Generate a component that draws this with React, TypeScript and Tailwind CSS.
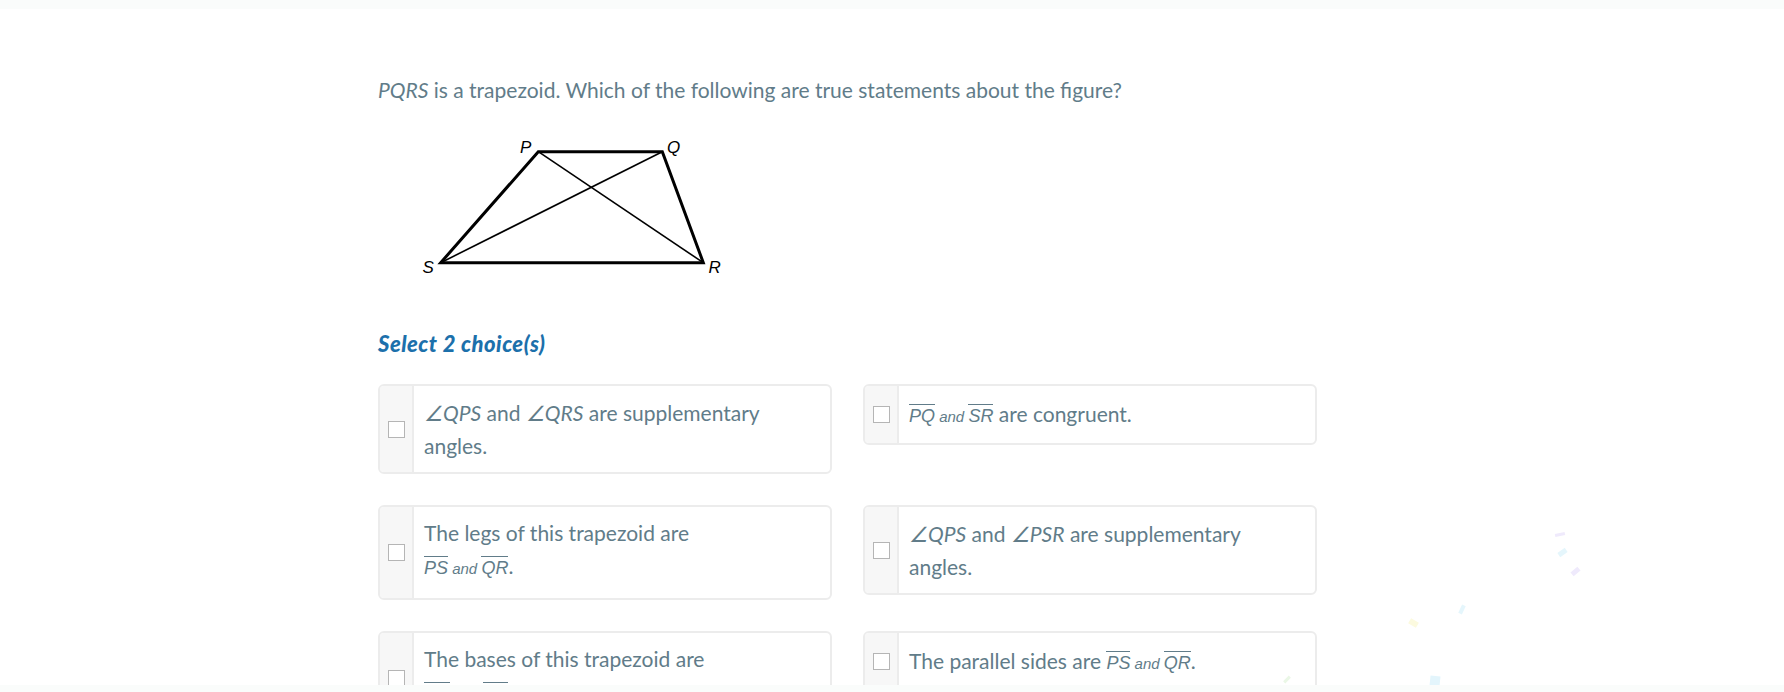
import React from "react";

const textFont = { fontFamily: "Lato, 'Noto Sans', sans-serif" };

function Bar({ children }: { children: React.ReactNode }) {
  return (
    <span className="inline-block border-t border-current leading-[23px] align-baseline">
      {children}
    </span>
  );
}

function Seg({ a, b }: { a: string; b: string }) {
  return (
    <span className="italic text-[18px]" style={{ fontFamily: "'Liberation Sans', Arial, sans-serif" }}>
      <Bar>{a}</Bar>
      <span className="text-[15px]"> and </span>
      <Bar>{b}</Bar>
    </span>
  );
}

function Card({ children, tall = false }: { children: React.ReactNode; tall?: boolean }) {
  return (
    <div className="flex border-2 border-[#ececec] rounded-[6px] bg-white overflow-hidden">
      <div className="w-[34px] shrink-0 bg-[#f7f7f7] border-r-2 border-[#ececec] flex items-center justify-center">
        <div className="w-[17px] h-[17px] border border-[#b5b5b5] bg-white" />
      </div>
      <div
        className={
          tall
            ? "flex-1 min-h-[57px] flex items-center pl-[10px] pr-[12px] pt-[9px] pb-[13px] text-[21px] leading-[33px] text-[#617c89]"
            : "flex-1 min-h-[57px] flex items-center pl-[10px] pr-[12px] py-[10px] text-[21px] leading-[33px] text-[#617c89]"
        }
      >
        <div>{children}</div>
      </div>
    </div>
  );
}

export default function App() {
  return (
    <div className="relative w-full h-[692px] overflow-hidden bg-white" style={textFont}>
      <div className="h-[9px] bg-[#fafcfb]" />
      <div className="ml-[378px] w-[939px] pt-[66px]">
        <p className="text-[21px] leading-[30px] text-[#617c89]">
          <i>PQRS</i> is a trapezoid. Which of the following are true statements about the figure?
        </p>
        <svg width="370" height="170" viewBox="0 0 370 170" className="mt-[15px] block">
          <g stroke="#000" fill="none" strokeLinejoin="miter">
            <polygon points="160.3,31.7 284.3,31.7 325.3,142.7 62.7,142.7" strokeWidth="3" />
            <line x1="160.3" y1="31.7" x2="325.3" y2="142.7" strokeWidth="1.6" />
            <line x1="284.3" y1="31.7" x2="62.7" y2="142.7" strokeWidth="1.6" />
          </g>
          <g fontFamily="'Liberation Sans', Arial, sans-serif" fontStyle="italic" fontSize="17" fill="#000">
            <text x="142" y="33">P</text>
            <text x="289" y="33">Q</text>
            <text x="44.5" y="153">S</text>
            <text x="330.5" y="153">R</text>
          </g>
        </svg>
        <p className="mt-[39px] text-[22px] leading-[30px] font-black italic tracking-[0.5px] text-[#1c70ab]">
          Select 2 choice(s)
        </p>
        <div className="mt-[25px] grid grid-cols-2 gap-x-[31px] gap-y-[31px] items-start">
          <Card>
            <i>∠QPS</i> and <i>∠QRS</i> are supplementary
            <br />
            angles.
          </Card>
          <Card>
            <Seg a="PQ" b="SR" /> are congruent.
          </Card>
          <Card tall>
            The legs of this trapezoid are
            <br />
            <Seg a="PS" b="QR" />.
          </Card>
          <Card>
            <i>∠QPS</i> and <i>∠PSR</i> are supplementary
            <br />
            angles.
          </Card>
          <Card tall>
            The bases of this trapezoid are
            <br />
            <Seg a="PQ" b="SR" />.
          </Card>
          <Card>
            The parallel sides are <Seg a="PS" b="QR" />.
          </Card>
        </div>
      </div>

      {/* faint confetti */}
      <div className="absolute left-[1555px] top-[533px] w-[10px] h-[3px] bg-[#efeafc] -rotate-12" />
      <div className="absolute left-[1558px] top-[550px] w-[9px] h-[5px] bg-[#e5f6fc] -rotate-[35deg]" />
      <div className="absolute left-[1571px] top-[569px] w-[9px] h-[5px] bg-[#efeafc] -rotate-[40deg]" />
      <div className="absolute left-[1460px] top-[605px] w-[4px] h-[9px] bg-[#e5f6fc] rotate-[25deg]" />
      <div className="absolute left-[1409px] top-[620px] w-[9px] h-[6px] bg-[#fcfadf] rotate-[30deg]" />
      <div className="absolute left-[1430px] top-[676px] w-[10px] h-[10px] bg-[#e3f5fc] rotate-6" />
      <div className="absolute left-[1283px] top-[678px] w-[8px] h-[3px] bg-[#eaf7e6] -rotate-45" />

      <div className="absolute left-0 right-0 bottom-0 h-[7px] bg-[#fafcfb]" />
    </div>
  );
}
